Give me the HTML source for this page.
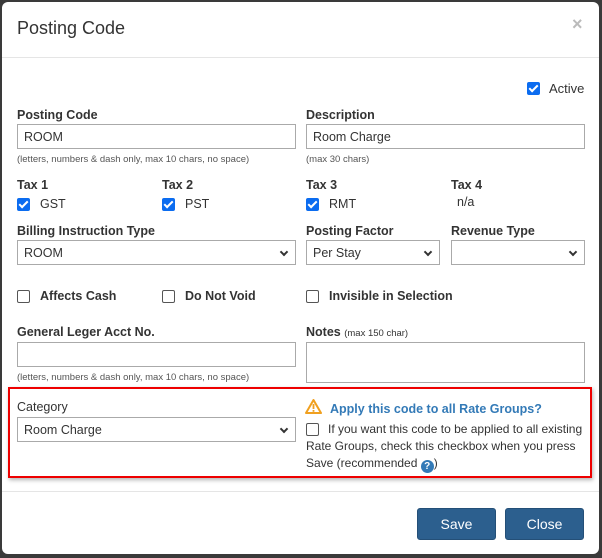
<!DOCTYPE html><html><head><style>
body{margin:0;width:602px;height:558px;background:#3a3a3a;font-family:"Liberation Sans",sans-serif;color:#333;position:relative;overflow:hidden}
.m{position:absolute;left:2px;top:2px;width:597px;height:552px;background:#fff;border-radius:6px}
.a{position:absolute;white-space:nowrap}
.l{font-size:12.5px;font-weight:bold;color:#333}
.i{position:absolute;border:1px solid #aaa;background:#fff;font-size:12.5px;box-sizing:border-box;padding-left:6px;line-height:24px;color:#333}
.h{font-size:9.5px;color:#555}
.cb{position:absolute;width:13px;height:13px;border-radius:2px;background:#0b6cf0;box-sizing:border-box}
.cb::after{content:"";position:absolute;left:4px;top:1px;width:3px;height:7px;border:solid #fff;border-width:0 2px 2px 0;transform:rotate(45deg)}
.cu{position:absolute;width:13px;height:13px;border-radius:2px;border:1px solid #555;box-sizing:border-box;background:#fff}
.t{font-size:12.5px;color:#333}
.ch{position:absolute;right:8px;top:8px;width:4px;height:4px;border:solid #333;border-width:0 2px 2px 0;transform:rotate(45deg)}
.btn{position:absolute;top:508px;height:32px;background:#2c5f8e;border:1px solid #244f77;border-radius:3px;color:#fff;font-size:14px;text-align:center;line-height:31px;box-sizing:border-box}
</style></head><body>
<div class="m"></div>
<div class="a" style="left:17px;top:18px;font-size:18px;color:#333">Posting Code</div>
<div class="a" style="left:572px;top:14px;font-size:18px;color:#bbb;font-weight:bold">×</div>
<div class="a" style="left:2px;top:57px;width:597px;height:1px;background:#e5e5e5"></div>
<div class="cb" style="left:527px;top:82px"></div>
<div class="a l" style="left:549px;top:81px;font-weight:normal;font-size:13px">Active</div>
<div class="a l" style="left:17px;top:108px">Posting Code</div>
<div class="a l" style="left:306px;top:108px">Description</div>
<div class="i" style="left:17px;top:124px;width:279px;height:25px">ROOM</div>
<div class="i" style="left:306px;top:124px;width:279px;height:25px">Room Charge</div>
<div class="a h" style="left:17px;top:154px">(letters, numbers &amp; dash only, max 10 chars, no space)</div>
<div class="a h" style="left:306px;top:154px">(max 30 chars)</div>
<div class="a l" style="left:17px;top:178px">Tax 1</div>
<div class="a l" style="left:162px;top:178px">Tax 2</div>
<div class="a l" style="left:306px;top:178px">Tax 3</div>
<div class="a l" style="left:451px;top:178px">Tax 4</div>
<div class="cb" style="left:17px;top:198px"></div><div class="a t" style="left:40px;top:197px">GST</div>
<div class="cb" style="left:162px;top:198px"></div><div class="a t" style="left:185px;top:197px">PST</div>
<div class="cb" style="left:306px;top:198px"></div><div class="a t" style="left:329px;top:197px">RMT</div>
<div class="a t" style="left:457px;top:195px">n/a</div>
<div class="a l" style="left:17px;top:224px">Billing Instruction Type</div>
<div class="a l" style="left:306px;top:224px">Posting Factor</div>
<div class="a l" style="left:451px;top:224px">Revenue Type</div>
<div class="i" style="left:17px;top:240px;width:279px;height:25px">ROOM<span class="ch"></span></div>
<div class="i" style="left:306px;top:240px;width:134px;height:25px">Per Stay<span class="ch"></span></div>
<div class="i" style="left:451px;top:240px;width:134px;height:25px"><span class="ch"></span></div>
<div class="cu" style="left:17px;top:290px"></div><div class="a l" style="left:40px;top:289px">Affects Cash</div>
<div class="cu" style="left:162px;top:290px"></div><div class="a l" style="left:185px;top:289px">Do Not Void</div>
<div class="cu" style="left:306px;top:290px"></div><div class="a l" style="left:329px;top:289px">Invisible in Selection</div>
<div class="a l" style="left:17px;top:325px">General Leger Acct No.</div>
<div class="a l" style="left:306px;top:325px">Notes <span style="font-weight:normal;font-size:9.5px">(max 150 char)</span></div>
<div class="i" style="left:17px;top:342px;width:279px;height:25px"></div>
<div class="i" style="left:306px;top:342px;width:279px;height:41px"></div>
<div class="a h" style="left:17px;top:372px">(letters, numbers &amp; dash only, max 10 chars, no space)</div>
<div class="a" style="left:8px;top:387px;width:584px;height:91px;border:2px solid #e00;box-sizing:border-box;box-shadow:1px 2px 4px rgba(0,0,0,.3)"></div>
<div class="a t" style="left:17px;top:400px">Category</div>
<div class="i" style="left:17px;top:417px;width:279px;height:25px">Room Charge<span class="ch"></span></div>
<svg class="a" style="left:305px;top:399px" width="17" height="15" viewBox="0 0 17 15"><path d="M8.5 1L16 14H1Z" fill="none" stroke="#f0a020" stroke-width="2" stroke-linejoin="round"/><rect x="7.6" y="5" width="1.8" height="5" fill="#f0a020"/><rect x="7.6" y="11" width="1.8" height="1.8" fill="#f0a020"/></svg>
<div class="a" style="left:330px;top:402px;font-size:12.5px;font-weight:bold;color:#337ab7">Apply this code to all Rate Groups?</div>
<div class="cu" style="left:306px;top:423px"></div>
<div class="a t" style="left:306px;top:421px;line-height:17px;white-space:normal;width:282px;font-size:12px;text-indent:22px">If you want this code to be applied to all existing Rate Groups, check this checkbox when you press Save (recommended <span style="display:inline-block;width:13px;height:13px;border-radius:50%;background:#337ab7;color:#fff;font-size:10px;font-weight:bold;text-align:center;line-height:13px;text-indent:0;vertical-align:-2px">?</span>)</div>
<div class="a" style="left:2px;top:491px;width:597px;height:1px;background:#e5e5e5"></div>
<div class="btn" style="left:417px;width:79px">Save</div>
<div class="btn" style="left:505px;width:79px">Close</div>
</body></html>
